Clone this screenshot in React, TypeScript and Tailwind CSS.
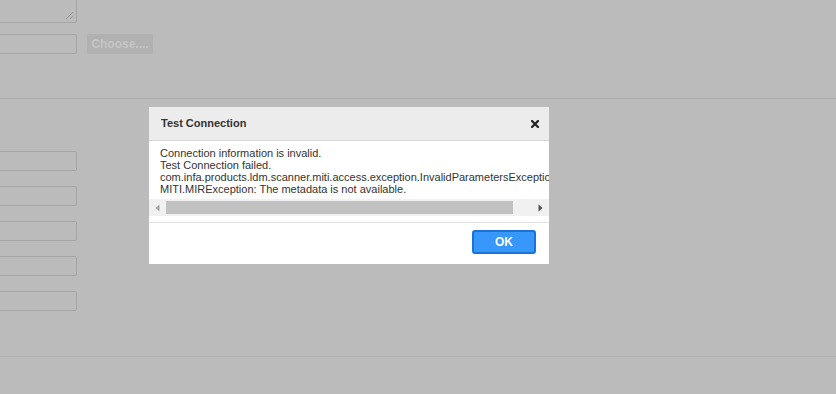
import React from 'react';

const fieldRows = [0, 1, 2, 3, 4];

const messageLines = [
  'Connection information is invalid.',
  'Test Connection failed.',
  'com.infa.products.ldm.scanner.miti.access.exception.InvalidParametersException: [MITI_10003] Exception encountered',
  'MITI.MIRException: The metadata is not available.',
];

const CloseIcon: React.FC = () => (
  <svg width="8" height="8" viewBox="0 0 8 8" className="block">
    <path d="M1 1 L7 7 M7 1 L1 7" stroke="#222" strokeWidth="2.2" strokeLinecap="square" />
  </svg>
);

const App: React.FC = () => {
  return (
    <div
      className="relative w-[836px] h-[394px] overflow-hidden bg-[#bbbbbb]"
      style={{ fontFamily: '"Liberation Sans", Arial, sans-serif' }}
    >
      {/* Page underneath the modal (dimmed) */}
      <div className="flex flex-col">
        <div className="-ml-[123px] flex flex-col">
          {/* textarea, scrolled partly out of view */}
          <div className="relative -mt-[37px] w-[200px] h-[60px] border border-[#a5a5a5] rounded-[2px]">
            <svg width="9" height="9" viewBox="0 0 9 9" className="absolute right-[2px] bottom-[2px]">
              <path d="M8 1 L1 8 M8 5 L5 8" stroke="#9a9a9a" strokeWidth="1" />
            </svg>
          </div>
          <div className="mt-[11px] flex items-center gap-[10px]">
            <div className="w-[200px] h-[20px] border border-[#a5a5a5] rounded-[2px]" />
            <div className="w-[66px] h-[20px] rounded-[2px] bg-[#b1b1b1] flex items-center justify-center text-[12px] font-bold text-[#c6c6c6]">
              Choose....
            </div>
          </div>
        </div>
        <div className="mt-[44px] h-px bg-[#acacac]" />
        <div className="-ml-[123px] mt-[52px] flex flex-col gap-[15px]">
          {fieldRows.map((r) => (
            <div key={r} className="w-[200px] h-[20px] border border-[#a5a5a5] rounded-[2px]" />
          ))}
        </div>
        <div className="mt-[45px] h-px bg-[#b0b0b0]" />
      </div>

      {/* Modal dialog */}
      <div className="absolute left-[149px] top-[107px] w-[400px] bg-white flex flex-col">
        <div className="h-[34px] bg-[#ececec] border-b border-[#d6d6d6] pl-[12px] pr-[10px] flex items-center justify-between">
          <span className="text-[11px] font-bold text-[#333]">Test Connection</span>
          <CloseIcon />
        </div>

        <div className="flex flex-col">
          <div className="overflow-hidden whitespace-nowrap pl-[11px] pt-[6px] pb-[4px] text-[11px] leading-[12px] text-[#333]">
            {messageLines.map((line) => (
              <div key={line}>{line}</div>
            ))}
          </div>
          {/* horizontal scrollbar */}
          <div className="h-[17px] bg-[#f1f1f1] flex items-center">
            <div className="w-[17px] h-[17px] flex items-center justify-center">
              <svg width="5" height="8" viewBox="0 0 5 8">
                <path d="M4.5 0.5 L0.5 4 L4.5 7.5 Z" fill="#a3a3a3" />
              </svg>
            </div>
            <div className="flex-1 h-[17px] py-[2px] pr-[19px]">
              <div className="h-full bg-[#c1c1c1]" />
            </div>
            <div className="w-[17px] h-[17px] flex items-center justify-center">
              <svg width="5" height="8" viewBox="0 0 5 8">
                <path d="M0.5 0.5 L4.5 4 L0.5 7.5 Z" fill="#505050" />
              </svg>
            </div>
          </div>
        </div>

        <div className="mt-[6px] border-t border-[#e3e3e3] pt-[7px] pb-[10px] pr-[13px] flex justify-end">
          <button className="w-[64px] h-[24px] rounded-[3px] bg-[#3797fb] border-2 border-[#1a73d6] text-white text-[12px] font-bold flex items-center justify-center">
            OK
          </button>
        </div>
      </div>
    </div>
  );
};

export default App;
